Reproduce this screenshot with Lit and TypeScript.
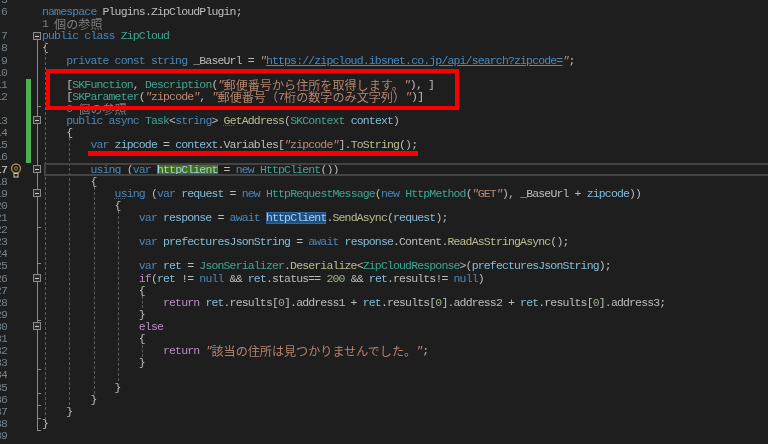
import { LitElement, html, css } from "lit";
import { customElement } from "lit/decorators.js";

type Tok = [string, string];
interface Row { n?: string; lens?: boolean; indent?: number; toks?: Tok[]; hot?: boolean }

const K = "k", C = "c", S = "s", M = "m", T = "t", V = "v", P = "p", N = "n", J = "j", U = "u", D = "d";

const ROWS: Row[] = [
  { n: "5" },
  { n: "6", toks: [[K, "namespace"], [T, " Plugins.ZipCloudPlugin;"]] },
  { lens: true, toks: [[T, "1 "], [J, "個の参照"]] },
  { n: "7", toks: [[K, "public class"], [T, " "], [C, "ZipCloud"]] },
  { n: "8", toks: [[T, "{"]] },
  { n: "9", indent: 4, toks: [[K, "private const string"], [T, " _BaseUrl = "], [S, "\""], [U, "https://zipcloud.ibsnet.co.jp/api/search?zipcode="], [S, "\""], [T, ";"]] },
  { n: "10" },
  { n: "11", indent: 4, toks: [[T, "["], [C, "SKFunction"], [T, ", "], [C, "Description"], [T, "("], [S, "\""], [J, "郵便番号から住所を取得します。"], [S, "\""], [T, "), ]"]] },
  { n: "12", indent: 4, toks: [[T, "["], [C, "SKParameter"], [T, "("], [S, "\"zipcode\""], [T, ", "], [S, "\""], [J, "郵便番号（"], [S, "7"], [J, "桁の数字のみ文字列）"], [S, "\""], [T, ")]"]] },
  { lens: true, indent: 4, toks: [[T, "0 "], [J, "個の参照"]] },
  { n: "13", indent: 4, toks: [[K, "public async"], [T, " "], [C, "Task"], [T, "<"], [K, "string"], [T, "> "], [D, "Ge"], [M, "tAddress"], [T, "("], [C, "SKContext"], [T, " "], [V, "context"], [T, ")"]] },
  { n: "14", indent: 4, toks: [[T, "{"]] },
  { n: "15", indent: 8, toks: [[K, "var"], [T, " "], [V, "zipcode"], [T, " = "], [V, "context"], [T, ".Variables["], [S, "\"zipcode\""], [T, "]."], [M, "ToString"], [T, "();"]] },
  { n: "16" },
  { n: "17", hot: true, indent: 8, toks: [["kd", "us"], [K, "ing"], [T, " ("], [K, "var"], [T, " "], ["g", "httpClient"], [T, " = "], [K, "new"], [T, " "], [C, "HttpClient"], [T, "())"]] },
  { n: "18", indent: 8, toks: [[T, "{"]] },
  { n: "19", indent: 12, toks: [["kd", "us"], [K, "ing"], [T, " ("], [K, "var"], [T, " "], [V, "request"], [T, " = "], [K, "new"], [T, " "], [C, "HttpRequestMessage"], [T, "("], [K, "new"], [T, " "], [C, "HttpMethod"], [T, "("], [S, "\"GET\""], [T, "), _BaseUrl + "], [V, "zipcode"], [T, "))"]] },
  { n: "20", indent: 12, toks: [[T, "{"]] },
  { n: "21", indent: 16, toks: [[K, "var"], [T, " "], [V, "response"], [T, " = "], [K, "await"], [T, " "], ["b", "httpClient"], [T, "."], [M, "SendAsync"], [T, "("], [V, "request"], [T, ");"]] },
  { n: "22" },
  { n: "23", indent: 16, toks: [[K, "var"], [T, " "], [V, "prefecturesJsonString"], [T, " = "], [K, "await"], [T, " "], [V, "response"], [T, ".Content."], [M, "ReadAsStringAsync"], [T, "();"]] },
  { n: "24" },
  { n: "25", indent: 16, toks: [[K, "var"], [T, " "], [V, "ret"], [T, " = "], [C, "JsonSerializer"], [T, "."], [M, "Deserialize"], [T, "<"], [C, "ZipCloudResponse"], [T, ">("], [V, "prefecturesJsonString"], [T, ");"]] },
  { n: "26", indent: 16, toks: [[P, "if"], [T, "("], [V, "ret"], [T, " != "], [K, "null"], [T, " && "], [V, "ret"], [T, ".status== "], [N, "200"], [T, " && "], [V, "ret"], [T, ".results!= "], [K, "null"], [T, ")"]] },
  { n: "27", indent: 16, toks: [[T, "{"]] },
  { n: "28", indent: 20, toks: [[P, "return"], [T, " "], [V, "ret"], [T, ".results["], [N, "0"], [T, "].address1 + "], [V, "ret"], [T, ".results["], [N, "0"], [T, "].address2 + "], [V, "ret"], [T, ".results["], [N, "0"], [T, "].address3;"]] },
  { n: "29", indent: 16, toks: [[T, "}"]] },
  { n: "30", indent: 16, toks: [[P, "else"]] },
  { n: "31", indent: 16, toks: [[T, "{"]] },
  { n: "32", indent: 20, toks: [[P, "return"], [T, " "], [S, "\""], [J, "該当の住所は見つかりませんでした。"], [S, "\""], [T, ";"]] },
  { n: "33", indent: 16, toks: [[T, "}"]] },
  { n: "34" },
  { n: "35", indent: 12, toks: [[T, "}"]] },
  { n: "36", indent: 8, toks: [[T, "}"]] },
  { n: "37", indent: 4, toks: [[T, "}"]] },
  { n: "38", toks: [[T, "}"]] },
  { n: "39" },
];

const FOLDS = [36, 120, 169, 193, 278, 326];
const GUIDES: [number, number, number][] = [
  [45, 42, 420], [69, 138, 405], [94, 187, 394], [118, 211, 381], [142, 296, 308], [142, 345, 357],
];
const TICKS = [106, 227, 263, 320, 369, 393, 405, 418, 430];

@customElement("app-root")
export class AppRoot extends LitElement {
  static styles = css`
    :host { display: block; width: 768px; height: 444px; overflow: hidden; background: #1e1e1e; position: relative; }
    .code { margin-top: -6px; display: flex; flex-direction: column; filter: blur(0.35px); }
    .row { display: flex; height: 12.12px; white-space: pre; font: 11.5px/12.12px "Liberation Mono", "Noto Sans CJK JP", monospace; color: #c8c8c8; }
    .num { width: 7px; flex: none; display: flex; justify-content: flex-end; overflow: hidden; color: #75828a; letter-spacing: -0.85px; }
    .hot .num { color: #d4d4d4; }
    .txt { margin-left: 35px; display: flex; letter-spacing: -0.85px; }
    .i4 { margin-left: 59.2px; } .i8 { margin-left: 83.4px; } .i12 { margin-left: 107.6px; }
    .i16 { margin-left: 131.8px; } .i20 { margin-left: 156px; }
    .k, .kd { color: #4a86b8; } .c { color: #3fa692; } .s { color: #bd8a74; } .m { color: #bcbc92; }
    .t { color: #bcbcbc; } .v { color: #84bcd8; } .p { color: #b88cc2; } .n { color: #9db292; }
    .kd { text-decoration: underline dotted #5f5f5f; }
    .lens .t, .lens .j { color: #7e7e7e; }
    .q { font-style: italic; }
    .u { color: #4a8cbe; text-decoration: underline; }
    .j { color: #b5846f; font: 12.1px/12.12px "Noto Sans CJK JP", sans-serif; letter-spacing: 0; }
    .d { color: #bcbc92; text-decoration: underline dotted #5f5f5f; }
    .g { background: #44701c; color: #9cd0ea; box-shadow: inset 0 0 0 1px #5a8a2a; }
    .b { background: #1f4f85; color: #9cd0ea; box-shadow: inset 0 0 0 1px #33659c; }
    .bar { position: absolute; left: 26px; width: 5px; top: 79px; height: 84px; background: #4caf50; }
    .rail { position: absolute; left: 37px; width: 1px; top: 36px; height: 394px; background: #8a8a8a; }
    .fold { position: absolute; left: 33px; width: 6px; height: 6px; margin-top: -4px; border: 1px solid #8a8a8a; background: #2d2d2d; display: flex; align-items: center; justify-content: center; }
    .fold::after { content: ""; width: 4px; height: 1px; background: #c8c8c8; }
    .tick { position: absolute; left: 37px; width: 4px; height: 1px; background: #8a8a8a; }
    .guide { position: absolute; width: 0; border-left: 1px dashed #5e5e5e; }
    .cur { position: absolute; left: 44px; right: 0; top: 163px; height: 9px; border: 2px solid #434343; border-right: 0; }
    .red1 { position: absolute; left: 46px; top: 69px; width: 405px; height: 33px; border: 4px solid #fa0000; }
    .red2 { position: absolute; left: 88px; top: 151px; width: 330px; height: 5px; background: #fa0000; }
    .bulb { position: absolute; left: 10px; top: 163px; }
  `;

  private renderTok([c, t]: Tok) {
    const parts = t.split(/(")/).filter((p) => p !== "");
    return html`<span class=${c}>${parts.map((p) => (p === '"' ? html`<span class="q">"</span>` : p))}</span>`;
  }

  private renderRow(r: Row) {
    const ind = r.indent ? `i${r.indent}` : "";
    return html`<div class="row ${r.hot ? "hot" : ""} ${r.lens ? "lens" : ""}">
      <div class="num">${r.n ? r.n : ""}</div>
      <div class="txt ${ind}">${(r.toks ?? []).map((tok) => this.renderTok(tok))}</div>
    </div>`;
  }

  render() {
    return html`
      <div class="code">${ROWS.map((r) => this.renderRow(r))}</div>
      <div class="bar"></div>
      <div class="rail"></div>
      ${TICKS.map((y) => html`<div class="tick" style="top:${y}px"></div>`)}
      ${FOLDS.map((y) => html`<div class="fold" style="top:${y}px"></div>`)}
      ${GUIDES.map(([x, a, b]) => html`<div class="guide" style="left:${x}px;top:${a}px;height:${b - a}px"></div>`)}
      <div class="cur"></div>
      <svg class="bulb" width="12" height="15" viewBox="0 0 12 15" fill="none">
        <circle cx="6" cy="5.5" r="4.5" stroke="#a8894e" stroke-width="1.4"/>
        <circle cx="6" cy="5.5" r="1.6" stroke="#a8894e" stroke-width="1"/>
        <rect x="4" y="10.5" width="4" height="3.5" stroke="#c8c8c8" stroke-width="1"/>
      </svg>
      <div class="red1"></div>
      <div class="red2"></div>
    `;
  }
}
